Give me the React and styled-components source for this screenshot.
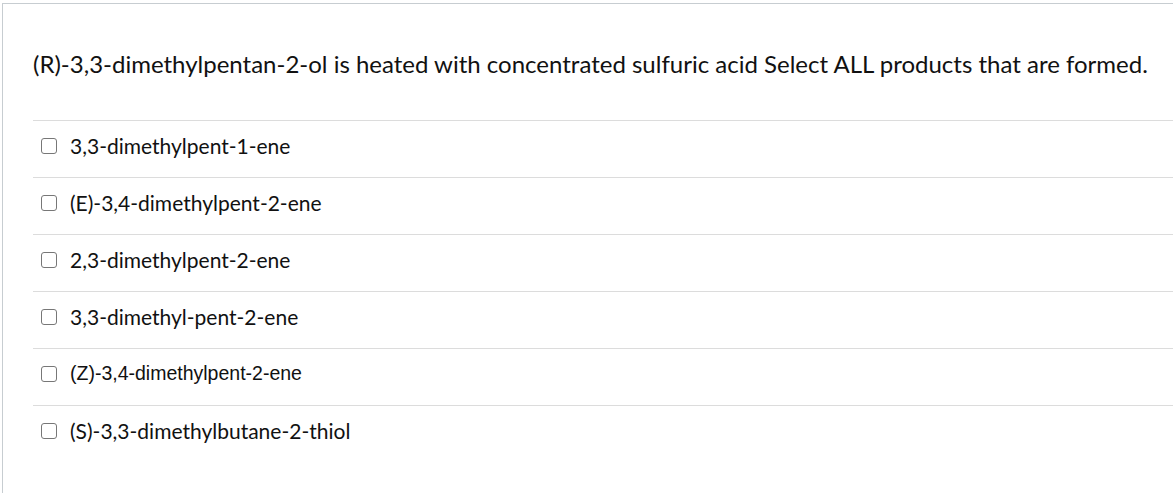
import React from "react";
import styled, { createGlobalStyle } from "styled-components";

const GlobalStyle = createGlobalStyle`
  html, body {
    margin: 0;
    padding: 0;
    background: #fff;
  }
  body {
    font-family: Lato, "Liberation Sans", sans-serif;
    color: #2d3b45;
  }
`;

const Frame = styled.div`
  margin: 3px 0 0 2px;
  height: 490px;
  border-top: 1px solid #c7cdd1;
  border-left: 1px solid #c7cdd1;
  padding-left: 30px;
  box-sizing: border-box;
`;

const Question = styled.p`
  margin: 0;
  padding: 42px 0 39px;
  font-size: 24px;
  line-height: 35px;
  color: #111;
`;

const Answers = styled.ul`
  list-style: none;
  margin: 0;
  padding: 0;
`;

const Answer = styled.li`
  display: flex;
  align-items: center;
  height: 57px;
  box-sizing: border-box;
  border-top: 1px solid #dcdcdc;
  padding: 0 0 7px 8px;
  font-size: ${({ $arial }) => ($arial ? "19.5px" : "21px")};
  color: #111;
  font-family: ${({ $arial }) =>
    $arial ? '"Liberation Sans", Arial, sans-serif' : 'Lato, "Liberation Sans", sans-serif'};
`;

const Box = styled.span`
  width: 14px;
  height: 14px;
  border: 1.5px solid #777;
  border-radius: 3px;
  margin-right: 13px;
  flex-shrink: 0;
`;

const options = [
  { label: "3,3-dimethylpent-1-ene" },
  { label: "(E)-3,4-dimethylpent-2-ene" },
  { label: "2,3-dimethylpent-2-ene" },
  { label: "3,3-dimethyl-pent-2-ene" },
  { label: "(Z)-3,4-dimethylpent-2-ene", arial: true },
  { label: "(S)-3,3-dimethylbutane-2-thiol" },
];

const App = () => (
  <>
    <GlobalStyle />
    <Frame>
      <Question>
        (R)-3,3-dimethylpentan-2-ol is heated with concentrated sulfuric acid Select ALL products that are formed.
      </Question>
      <Answers>
        {options.map((o) => (
          <Answer key={o.label} $arial={o.arial}>
            <Box />
            {o.label}
          </Answer>
        ))}
      </Answers>
    </Frame>
  </>
);

export default App;
